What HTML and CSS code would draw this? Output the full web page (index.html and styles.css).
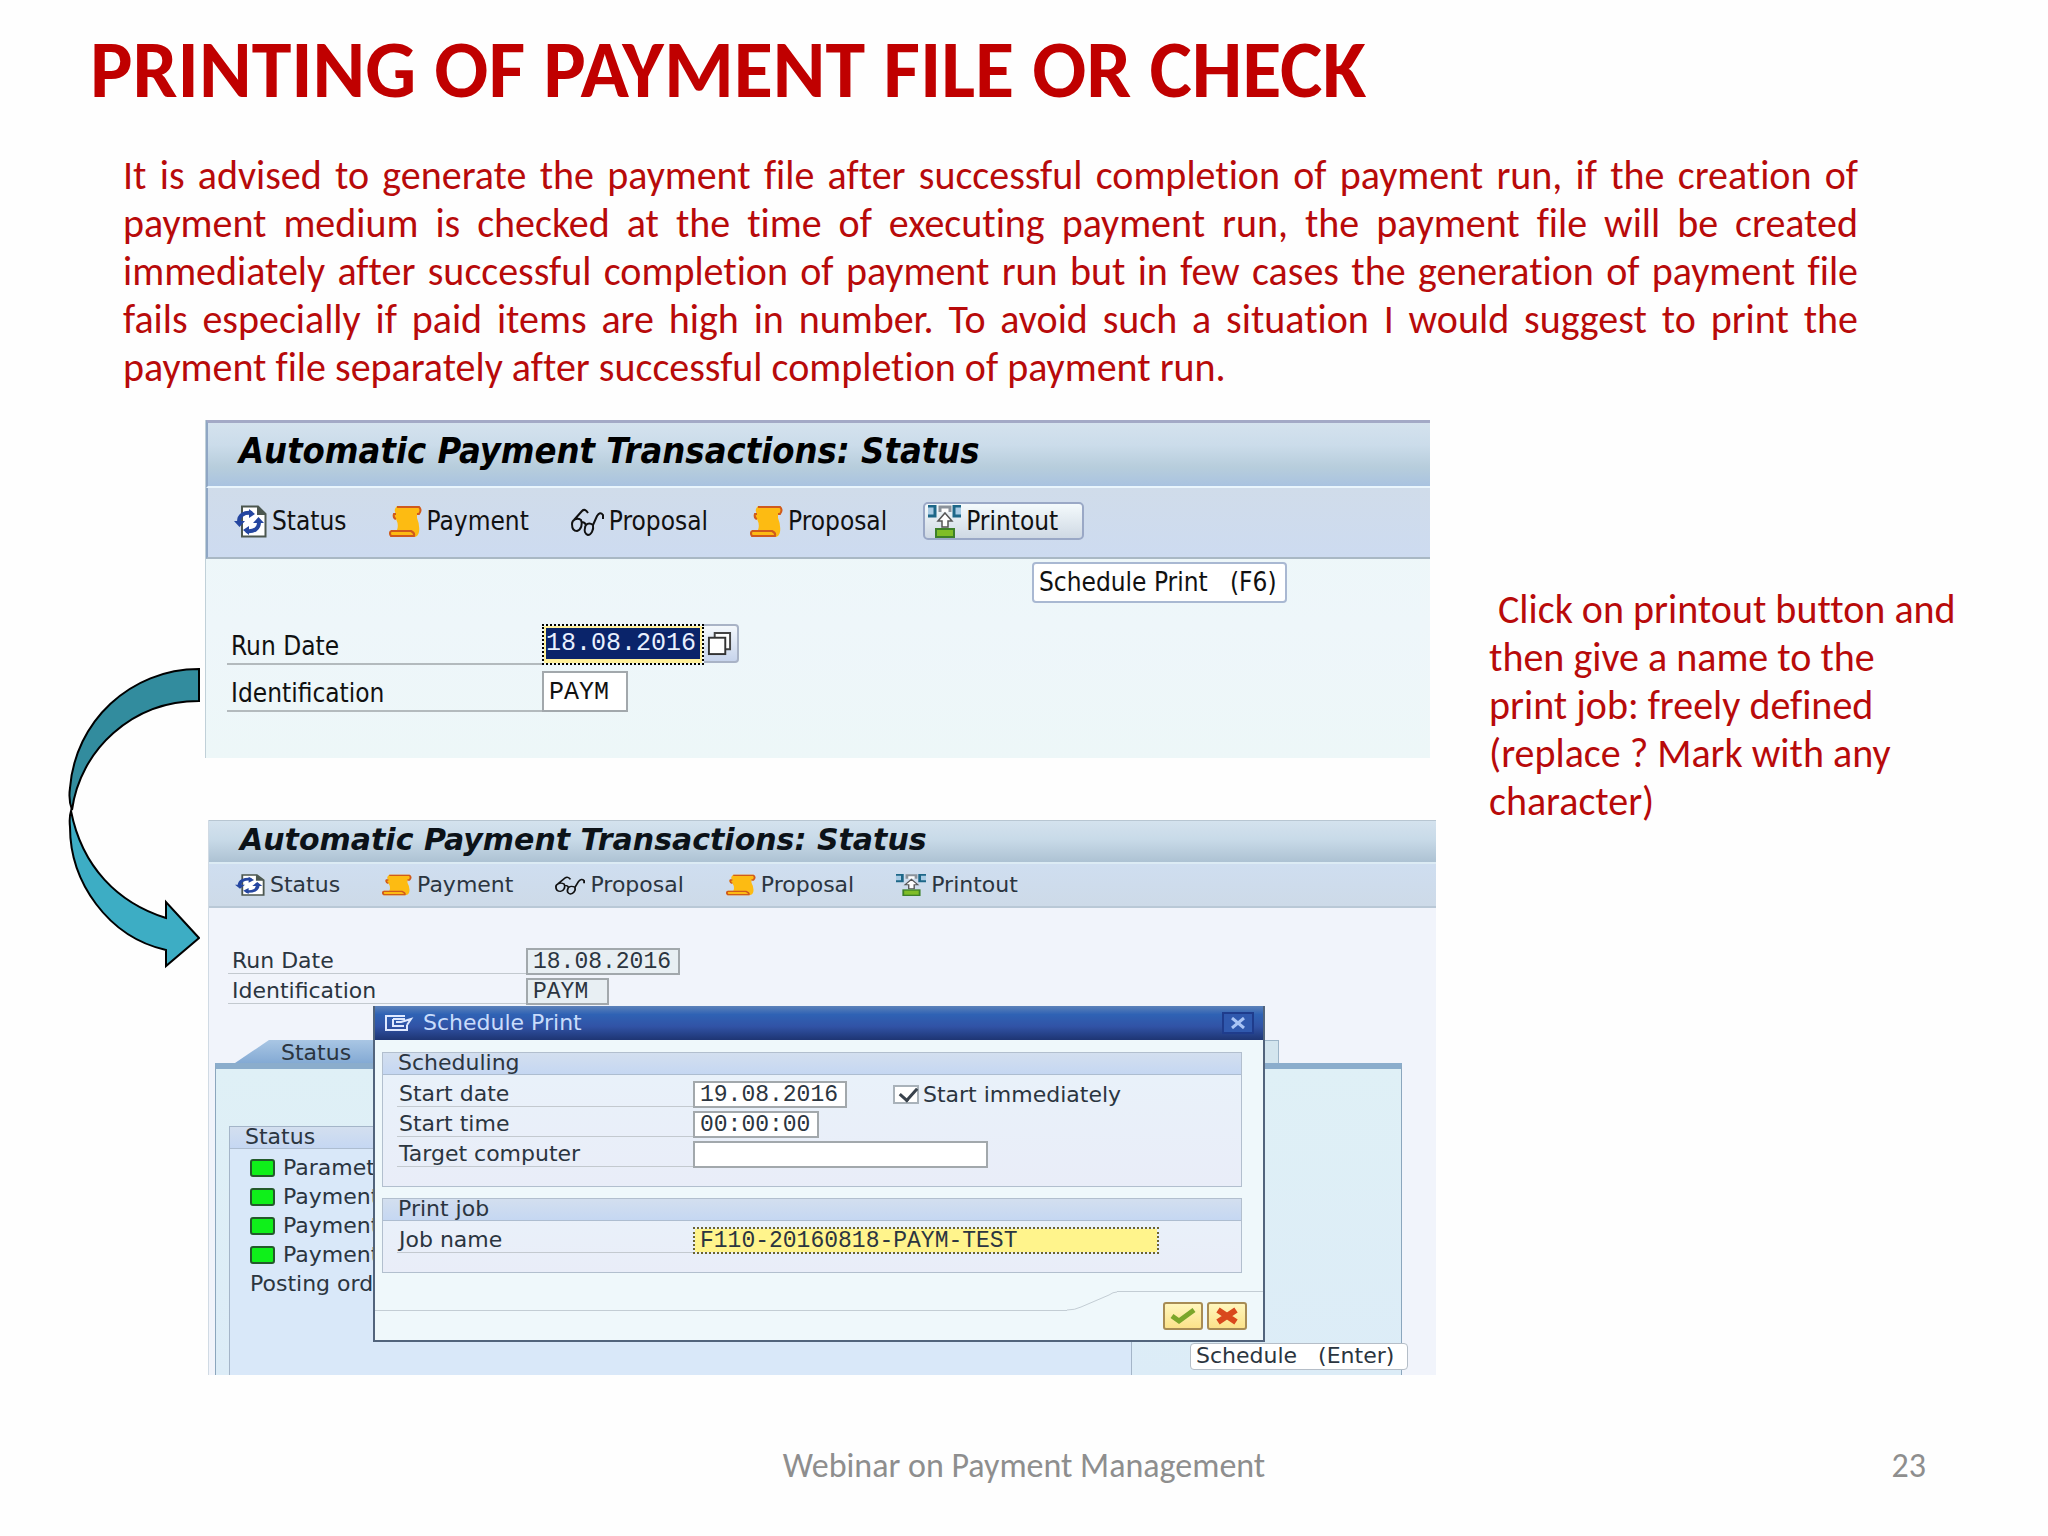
FILE: index.html
```html
<!DOCTYPE html>
<html lang="en">
<head>
<meta charset="utf-8">
<title>Printing of payment file or check</title>
<link rel="stylesheet" href="styles.css">
</head>
<body>
<svg class="sprite" aria-hidden="true">
  <symbol id="i-status" viewBox="0 0 33 33" preserveAspectRatio="none">
    <path d="M8 1.500H24L31.500 9V31.500H8Z" fill="#fff" stroke="#4c574f" stroke-width="2"/>
    <path d="M23 1V10H32Z" fill="#4c574f"/>
    <path d="M5 17C5 10 10 7 18 8M25 17C25 24 20 27 12 26" fill="none" stroke="#2546a0" stroke-width="4"/>
    <path d="M0 16H11L5.500 22ZM19 18H30L24.500 12ZM15 4L21 9L15 13ZM15 21L9 25L15 30Z" fill="#2546a0"/>
  </symbol>
  <symbol id="i-scroll" viewBox="0 0 33 33" preserveAspectRatio="none">
    <path d="M8 1H30Q34 5 30 9H28V13Q31 20 30 27Q29 32 25 32H2Q-1 28 2 25H8Q10 20 7 14Q3 13 4 9H7Q4 5 8 1Z" fill="#fdbb12"/>
    <path d="M8 2H30Q33 5 30 9H28M7 9H5Q4 13 7 14M2 26H22Q26 28 25 31H2Q0 28 2 26" fill="none" stroke="#d05a1c" stroke-width="2"/>
  </symbol>
  <symbol id="i-glasses" viewBox="0 0 33 33" preserveAspectRatio="none">
    <path d="M1 19C1 15 6 12 10 15C12 19 10 25 6 26C2 26 1 23 1 19ZM14 23C14 19 18 17 22 20C23 25 20 30 17 30C14 29 13 26 14 23ZM10 18Q13 16 15 20M3 15L11 6Q14 3 17 8M22 20L26 11Q29 6 32 10V14" fill="none" stroke="#111" stroke-width="2"/>
  </symbol>
  <symbol id="i-print" viewBox="0 0 33 33" preserveAspectRatio="none">
    <path d="M0 1H7V11H0M33 1H26V11H33" fill="#a8cbe4" stroke="#1d6788" stroke-width="3"/>
    <path d="M12 7V2H22V7" fill="#fff" stroke="#8b929a" stroke-width="3"/>
    <path d="M17 8L24 16H20V22H14V16H10Z" fill="#fff" stroke="#555" stroke-width="1.500"/>
    <rect x="8" y="24" width="18" height="8" fill="#7fbd27" stroke="#3e8028" stroke-width="2"/>
  </symbol>
</svg>

<main class="slide">
  <h1 class="slide-title">PRINTING OF PAYMENT FILE OR CHECK</h1>
  <p class="intro">It is advised to generate the payment file after successful completion of payment run, if the creation of payment medium is checked at the time of executing payment run, the payment file will be created immediately after successful completion of payment run but in few cases the generation of payment file fails especially if paid items are high in number. To avoid such a situation I would suggest to print the payment file separately after successful completion of payment run.</p>

  <div class="content">
    <svg class="arrow" viewBox="0 0 132 302" aria-hidden="true">
      <path d="M131 2V34C64 34 12 83 4 143C1 135 1 128 2 121C7 55 62 2 131 2Z" fill="#328c9e" stroke="#000" stroke-width="2"/>
      <path d="M3 144C14 200 50 236 98 251V235L131 271L98 299V283C40 270 2 215 2 160Q1 150 3 144Z" fill="#3dadc4" stroke="#000" stroke-width="2"/>
    </svg>

    <div class="shots">
      <section class="sap sap-large">
        <h2 class="bar">Automatic Payment Transactions: Status</h2>
        <div class="tools">
          <button class="tool" type="button"><svg><use href="#i-status"/></svg>Status</button>
          <button class="tool" type="button"><svg><use href="#i-scroll"/></svg>Payment</button>
          <button class="tool" type="button"><svg><use href="#i-glasses"/></svg>Proposal</button>
          <button class="tool" type="button"><svg><use href="#i-scroll"/></svg>Proposal</button>
          <button class="tool tool-active" type="button"><svg><use href="#i-print"/></svg>Printout</button>
        </div>
        <div class="fields">
          <div class="field"><label for="d1">Run Date</label><input id="d1" class="in-date selected" value="18.08.2016"><button class="picker" type="button" aria-label="Choose date"><svg viewBox="0 0 26 26"><path d="M8 7V2H24V19H19" fill="#fff" stroke="#444" stroke-width="2"/><rect x="2" y="7" width="17" height="17" fill="#fff" stroke="#333" stroke-width="2"/></svg></button></div>
          <div class="field"><label for="p1">Identification</label><input id="p1" class="in-id" value="PAYM"></div>
        </div>
        <div class="tip" role="tooltip">Schedule Print &nbsp; (F6)</div>
      </section>

      <section class="sap sap-small">
        <h2 class="bar">Automatic Payment Transactions: Status</h2>
        <div class="tools">
          <button class="tool" type="button"><svg><use href="#i-status"/></svg>Status</button>
          <button class="tool" type="button"><svg><use href="#i-scroll"/></svg>Payment</button>
          <button class="tool" type="button"><svg><use href="#i-glasses"/></svg>Proposal</button>
          <button class="tool" type="button"><svg><use href="#i-scroll"/></svg>Proposal</button>
          <button class="tool" type="button"><svg><use href="#i-print"/></svg>Printout</button>
        </div>
        <div class="fields">
          <div class="field"><label for="d2">Run Date</label><input id="d2" class="in-date" value="18.08.2016" readonly></div>
          <div class="field"><label for="p2">Identification</label><input id="p2" class="in-id" value="PAYM" readonly></div>
        </div>
        <div class="tabs"><button class="tab" type="button">Status</button><span class="tab-rest"></span></div>
        <div class="tab-body">
          <div class="status-box">
            <h3 class="group-head">Status</h3>
            <ul class="leds">
              <li><i class="led"></i>Paramet</li>
              <li><i class="led"></i>Payment</li>
              <li><i class="led"></i>Payment</li>
              <li><i class="led"></i>Payment</li>
              <li>Posting ord</li>
            </ul>
          </div>
        </div>

        <div class="dialog" role="dialog" aria-label="Schedule Print">
          <div class="dialog-bar">
            <svg class="dialog-icon" viewBox="0 0 30 18"><path d="M20 2H1V16H22V11M8 5V12H19M11 8H18M8 5H20M16 8L26 5L22 11" fill="none" stroke="#dfe9ff" stroke-width="2"/></svg>
            <span class="dialog-title">Schedule Print</span>
            <button class="close" type="button" aria-label="Close"><svg viewBox="0 0 16 12"><path d="M2 1L14 11M14 1L2 11" stroke="#a9c4f5" stroke-width="3"/></svg></button>
          </div>
          <div class="dialog-body">
            <div class="group">
              <h3 class="group-head">Scheduling</h3>
              <div class="field"><label for="sd">Start date</label><input id="sd" class="in-date" value="19.08.2016"><span class="check"><input id="now" type="checkbox" checked><label for="now">Start immediately</label></span></div>
              <div class="field"><label for="st">Start time</label><input id="st" class="in-time" value="00:00:00"></div>
              <div class="field"><label for="tc">Target computer</label><input id="tc" class="in-host" value=""></div>
            </div>
            <div class="group">
              <h3 class="group-head">Print job</h3>
              <div class="field"><label for="jn">Job name</label><input id="jn" class="in-job" value="F110-20160818-PAYM-TEST"></div>
            </div>
          </div>
          <div class="dialog-foot">
            <span class="rule"></span>
            <svg class="slope" viewBox="0 0 50 20" aria-hidden="true"><path d="M0 19Q8 19 14 16L42 4Q46 1 50 1" fill="none" stroke="#c3cdd4" stroke-width="1"/></svg>
            <div class="actions">
              <button class="act" type="button" aria-label="Confirm"><svg viewBox="0 0 28 18"><path d="M3 9L10 14L25 3" fill="none" stroke="#7ba62b" stroke-width="5"/></svg></button>
              <button class="act" type="button" aria-label="Cancel"><svg viewBox="0 0 28 18"><path d="M5 3L23 15M23 3L5 15" stroke="#d9481c" stroke-width="6"/></svg></button>
            </div>
          </div>
        </div>
        <div class="tip" role="tooltip">Schedule &nbsp; (Enter)</div>
      </section>
    </div>

    <p class="note">&nbsp;Click on printout button and then give a name to the print job: freely defined (replace ? Mark with any character)</p>
  </div>

  <footer class="foot"><span class="foot-text">Webinar on Payment Management</span><span class="page">23</span></footer>
</main>
</body>
</html>
```
FILE: styles.css
```css
* { box-sizing: border-box; }
body { margin: 0; background: #fefefe; }
h1, h2, h3, p, ul { margin: 0; padding: 0; }
button, input { font: inherit; color: inherit; margin: 0; }
.sprite { position: absolute; width: 0; height: 0; }

.slide { font-family: Carlito, Calibri, Lato, sans-serif; font-variant-ligatures: none; color: #b80a0a; }
.slide-title { padding: 22px 90px 0; font-size: 80px; line-height: 96px; font-weight: 700; color: #c00000; }
.intro { margin: 34px 190px 0 123px; font-size: 40px; line-height: 48px; text-align: justify; }
.content { display: grid; grid-template-columns: 132px minmax(0, 1fr) 467px; margin-top: 28px; padding: 0 92px 0 68px; }
.arrow { width: 132px; height: 302px; margin-top: 247px; }
.shots { display: flex; flex-direction: column; gap: 62px; padding-left: 5px; margin-right: 53px; }
.note { margin-top: 166px; font-size: 40px; line-height: 48px; }
.foot { display: grid; grid-template-columns: 1fr auto 1fr; margin-top: 67px; padding: 0 122px 47px; font-size: 34px; line-height: 48px; color: #8e8e8e; }
.foot-text { grid-column: 2; }
.page { text-align: right; }

/* SAP windows */
.sap { position: relative; color: #111; }
.tools { display: flex; align-items: center; }
.tool { display: flex; align-items: center; padding: 0 4px; border: 0; background: none; white-space: nowrap; }
.field { display: flex; }
.field > label { border-bottom: 2px solid #b3babd; white-space: nowrap; }
.field input { font-family: "Liberation Mono", monospace; border: 2px solid #a2a8ac; border-radius: 0; background: #fff; }
.tip { position: absolute; background: #fff; border: 2px solid #a9b8d2; border-radius: 4px; white-space: nowrap; }

.sap-large { margin-right: 6px; border-left: 1px solid #c0d0d8; background: linear-gradient(#ecf8f7, #eef6fa 60%, #edf7f8); font: 26px/36px "DejaVu Sans Condensed", "DejaVu Sans", sans-serif; }
.sap-large .bar { height: 68px; padding: 0 31px; border-top: 3px solid #a3a9c6; border-left: 2px solid #8fa6c4; border-bottom: 2px solid #e9f5fc; background: linear-gradient(#d4e2ee, #cbdcea 35%, #b7cddc 70%, #a9c3e0); font: italic bold 36px/56px "DejaVu Sans Condensed", "DejaVu Sans", sans-serif; color: #000; }
.sap-large .tools { gap: 34px; height: 71px; padding: 0 22px 3px; border-left: 2px solid #8fa6c4; border-bottom: 2px solid #a9b8c4; background: linear-gradient(#d0dcea, #cddbf0); }
.sap-large .tool { gap: 5px; height: 38px; }
.sap-large .tool svg { width: 33px; height: 33px; }
.sap-large .tool-active { margin-left: -2px; padding: 0 24px 0 3px; border: 2px solid #9aa8c6; border-radius: 5px; background: linear-gradient(#f4fafc, #cfd9e4); }
.sap-large .fields { display: flex; flex-direction: column; gap: 6px; padding: 65px 21px 46px; }
.sap-large .field > label { width: 315px; height: 41px; padding: 4px; }
.sap-large .field input { height: 41px; padding: 2px 5px 0; font-size: 25px; }
.sap-large .in-date { width: 162px; }
.sap-large .field .selected { padding: 2px 2px 4px; border: 2px dotted #000; color: #e8f0ff; background: linear-gradient(#0a246a, #0a246a) content-box, #fff09a; background-clip: content-box, padding-box; }
.sap-large .in-id { width: 86px; }
.picker { width: 35px; height: 39px; padding: 0 0 0 3px; border: 2px solid #a9b3c6; border-left: 0; border-radius: 0 4px 4px 0; background: linear-gradient(#f4f8fc, #c7d4ec); }
.picker svg { display: block; width: 25px; height: 25px; }
.sap-large .tip { top: 142px; right: 143px; width: 255px; height: 41px; padding: 0 5px; }

.sap-small { margin-left: 3px; border-left: 1px solid #d0dae4; background: #f1f4fb; font: 22px/26px "DejaVu Sans", sans-serif; color: #2b3540; }
.sap-small .bar { height: 42px; padding: 0 31px; border-top: 1px solid #b8c6d2; background: linear-gradient(#d4e2ee, #c8dae8 45%, #adc2d3); font: italic bold 30px/38px "DejaVu Sans", sans-serif; color: #0c1218; }
.sap-small .tools { gap: 34px; height: 46px; padding: 0 22px; border-top: 2px solid #dcebf4; border-bottom: 2px solid #b9c8d6; background: linear-gradient(#cfdef0, #cddae8); }
.sap-small .tool { gap: 5px; }
.sap-small .tool svg { width: 30px; height: 22px; }
.sap-small .fields { display: flex; flex-direction: column; gap: 3px; padding: 40px 19px 0; }
.sap-small .field > label { width: 298px; height: 26px; padding-left: 4px; border-bottom: 1px solid #c3c9cf; }
.sap-small .field input { height: 27px; padding: 0 5px; font-size: 23px; }
.sap-small .field .in-date { width: 154px; }
.sap-small .field .in-id { width: 83px; }
.sap-small .field input[readonly] { background: #e8eff3; }
.tabs { display: flex; height: 23px; margin: 35px 157px 0 26px; }
.tab { width: 180px; padding: 0 0 0 46px; border: 0; text-align: left; background: linear-gradient(#a9c6e4, #84aad4); clip-path: polygon(34px 0, 100% 0, 100% 100%, 0 100%); }
.tab-rest { flex: 1; border: 1px solid #9db5c8; border-bottom: 0; background: #d3e5ee; }
.tab-body { display: flex; height: 312px; margin: 0 34px 0 6px; padding: 57px 269px 0 13px; border: 1px solid #8ba6bd; border-top: 6px solid #8badcc; border-bottom: 0; background: linear-gradient(#dff0f6, #dcecf7); }
.status-box { flex: 1; border: 1px solid #a4b5c8; border-bottom: 0; background: #d9e8f9; }
.group-head { height: 22px; padding-left: 15px; font-size: 22px; line-height: 20px; font-weight: 400; border-bottom: 1px solid #adbdd0; background: linear-gradient(#d3dfef, #c5d7f2); }
.leds { list-style: none; padding: 4px 20px; }
.leds li { display: flex; align-items: center; gap: 8px; height: 29px; white-space: nowrap; }
.led { width: 25px; height: 18px; border: 2px solid #235a2b; border-radius: 3px; background: #0ff01a; }
.sap-small .tip { right: 28px; bottom: 5px; height: 27px; width: 218px; padding: 0 5px; border: 1px solid #b5bec8; line-height: 24px; }

.dialog { position: absolute; top: 186px; left: 164px; right: 171px; border: 2px solid #52647c; border-top: 0; background: #eff8fb; }
.dialog-bar { display: flex; align-items: center; gap: 8px; height: 34px; padding: 0 9px 0 10px; color: #c9dcfb; background: linear-gradient(#5d82ba, #2f62b4 25%, #3153a6 60%, #1e3573); }
.dialog-icon { width: 30px; height: 18px; }
.dialog-title { flex: 1; }
.close { width: 32px; height: 22px; padding: 0; border: 2px solid #1f3c8c; background: #3059ae; }
.close svg { display: block; width: 16px; height: 12px; margin: auto; }
.dialog-body { display: flex; flex-direction: column; gap: 11px; padding: 12px 21px 0 7px; }
.group { padding-bottom: 18px; border: 1px solid #b2bfce; background: linear-gradient(#e9f2fa, #e9edf8); }
.group .group-head { margin-bottom: 6px; }
.group .field { margin: 3px 14px 0; }
.sap-small .group .field > label { width: 296px; padding-left: 2px; }
.group .field .in-time { width: 126px; }
.group .field .in-host { width: 295px; }
.group .field .in-job { width: 466px; border: 2px dotted #6b6430; background: #fff48c; background-clip: padding-box; }
.check { display: flex; align-items: center; gap: 4px; margin-left: 46px; }
.sap-small .field .check input { appearance: none; width: 26px; height: 19px; border: 2px solid #a9b2ba; padding: 0; background: #fff; }
.field .check input:checked::before { content: ""; display: block; width: 8px; height: 14px; margin: -3px 0 0 8px; border: solid #39424c; border-width: 0 3px 3px 0; transform: rotate(42deg); }
.dialog-foot { display: flex; height: 67px; padding-top: 18px; }
.rule { flex: 1; height: 20px; border-bottom: 1px solid #c3cdd4; }
.slope { width: 50px; height: 20px; }
.actions { display: flex; gap: 4px; width: 146px; height: 47px; padding: 10px 0 0 46px; border-top: 1px solid #c3cdd4; }
.act { width: 40px; height: 28px; padding: 0; border: 2px solid #a78c55; border-radius: 3px; background: linear-gradient(#fff6bd, #fbe28a); }
.act svg { display: block; width: 28px; height: 18px; margin: auto; }
```
